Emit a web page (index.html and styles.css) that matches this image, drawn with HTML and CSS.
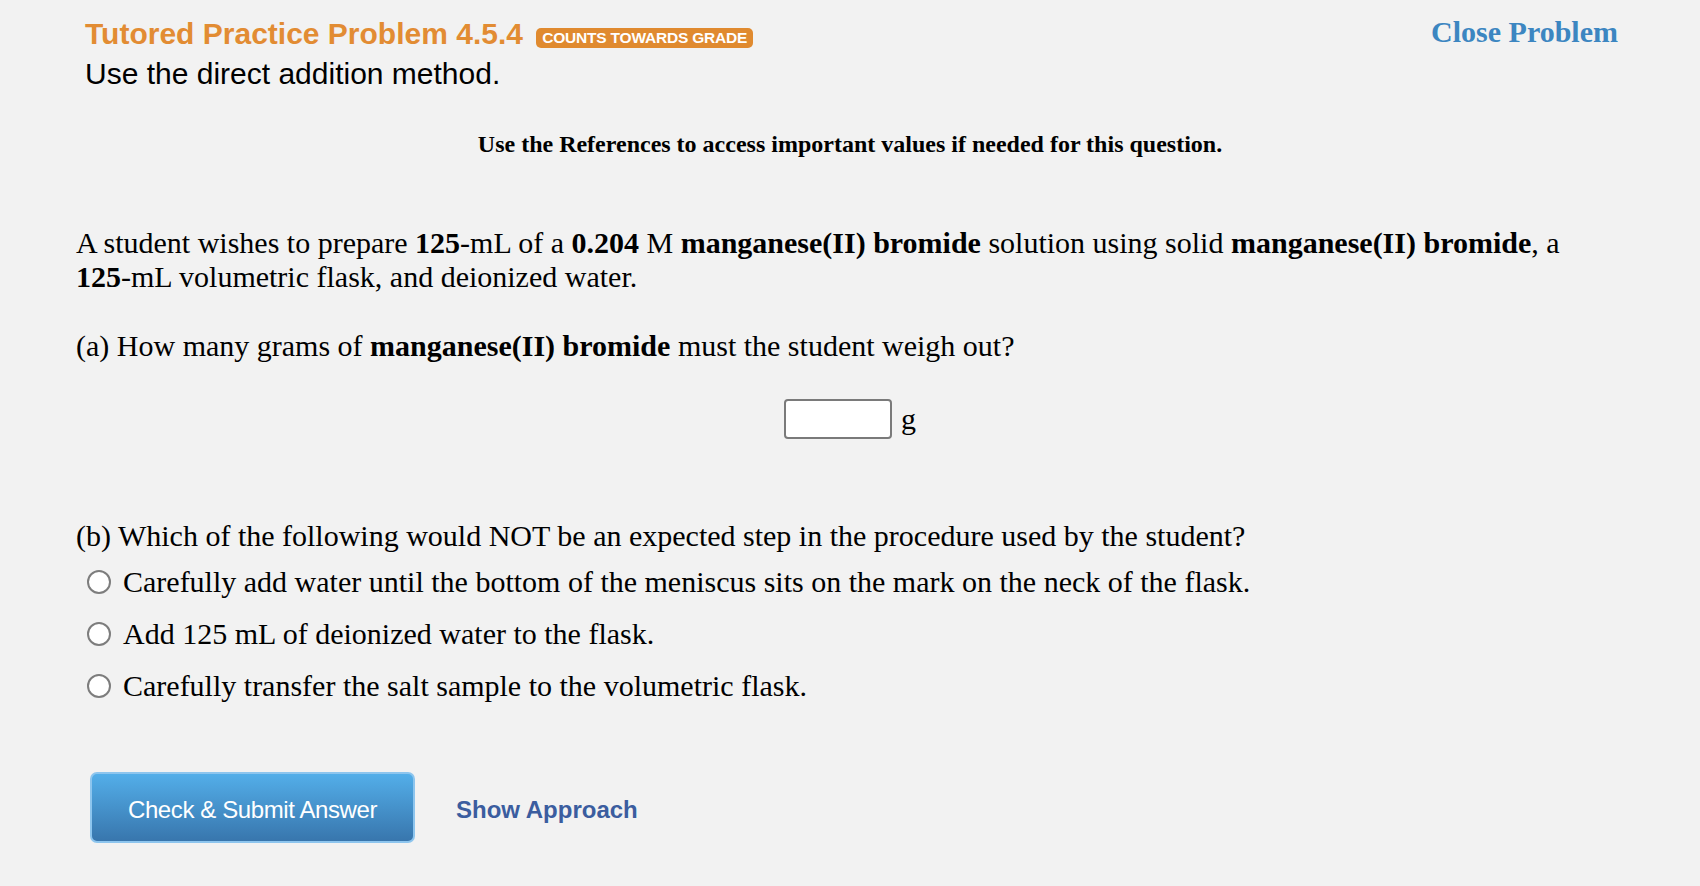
FILE: index.html
```html
<!DOCTYPE html>
<html lang="en">
  <head>
    <meta charset="UTF-8" />
    <meta name="viewport" content="width=device-width, initial-scale=1.0" />
    <title>Tutored Practice Problem 4.5.4</title>
    <link rel="stylesheet" href="styles.css">
  </head>
  <body>
    <div class="page">
      <header class="problem-header">
        <div class="heading">
          <h1 class="title">Tutored Practice Problem 4.5.4 <span class="badge">COUNTS TOWARDS GRADE</span></h1>
          <p class="subtitle">Use the direct addition method.</p>
        </div>
        <a class="close-link" href="#">Close Problem</a>
      </header>

      <p class="references">Use the References to access important values if needed for this question.</p>

      <div class="question">
        <p class="intro">
          A student wishes to prepare <b>125</b>-mL of a <b>0.204</b> M <b>manganese(II) bromide</b> solution using solid <b>manganese(II) bromide</b>, a <span class="nowrap"><b>125</b>-mL</span> volumetric flask, and deionized water.
        </p>

        <p class="part">(a) How many grams of <b>manganese(II) bromide</b> must the student weigh out?</p>

        <div class="answer-row">
          <input type="text" class="answer-input" />
          <span class="unit">g</span>
        </div>

        <p class="part part-b">(b) Which of the following would NOT be an expected step in the procedure used by the student?</p>

        <div class="options">
          <label class="option"><input type="radio" name="step" /> Carefully add water until the bottom of the meniscus sits on the mark on the neck of the flask.</label>
          <label class="option"><input type="radio" name="step" /> Add 125 mL of deionized water to the flask.</label>
          <label class="option"><input type="radio" name="step" /> Carefully transfer the salt sample to the volumetric flask.</label>
        </div>
      </div>

      <div class="actions">
        <button type="button" class="submit-btn">Check &amp; Submit Answer</button>
        <a class="approach-link" href="#">Show Approach</a>
      </div>
    </div>
  </body>
</html>
```

FILE: styles.css
```css
body {
  margin: 0;
  background: #f2f2f2;
  color: #000;
  font-family: 'Liberation Serif', 'Times New Roman', serif;
}
.page {
  min-height: 886px;
}
.problem-header {
  display: flex;
  justify-content: space-between;
  align-items: flex-start;
  padding: 16px 82px 0 85px;
}
.title {
  margin: 0;
  font: 700 30px/36px 'Liberation Sans', Arial, sans-serif;
  color: #e28c33;
}
.badge {
  display: inline-block;
  margin-left: 5px;
  padding: 0 6px;
  background: #e08a2f;
  color: white;
  border-radius: 5px;
  font-size: 15.5px;
  letter-spacing: -0.2px;
  line-height: 20px;
  vertical-align: 1px;
}
.subtitle {
  margin: 2px 0 0;
  font: 400 30px/40px 'Liberation Sans', Arial, sans-serif;
}
.close-link {
  font: 700 30px/32px 'Liberation Serif', serif;
  color: #3c86c1;
  text-decoration: none;
}
.references {
  margin: 35px 0 0;
  text-align: center;
  font-weight: bold;
  font-size: 24px;
  line-height: 30px;
}
.question {
  margin-top: 67px;
  padding: 0 76px;
  font-size: 30px;
  line-height: 34px;
}
.question p {
  margin: 0;
}
.nowrap {
  white-space: nowrap;
}
.question .part {
  margin-top: 35px;
}
.answer-row {
  display: flex;
  justify-content: center;
  align-items: center;
  margin-top: 36px;
}
.answer-input {
  width: 108px;
  height: 40px;
  box-sizing: border-box;
  border: 2px solid #7a7a7a;
  border-radius: 4px;
  background: white;
  margin: 0;
}
.unit {
  margin-left: 9px;
}
.question .part-b {
  margin-top: 80px;
}
.options {
  margin-top: 3px;
}
.option {
  display: flex;
  align-items: center;
  height: 52px;
}
.option input {
  appearance: none;
  width: 24px;
  height: 24px;
  margin: 0 12px 0 11px;
  box-sizing: border-box;
  border: 2px solid #7d7d7d;
  border-radius: 50%;
  background: white;
}
.actions {
  display: flex;
  align-items: center;
  gap: 41px;
  margin-top: 60px;
  padding-left: 90px;
}
.submit-btn {
  width: 325px;
  height: 71px;
  padding: 4px 0 0;
  border: 2px solid #8dc5ee;
  border-radius: 7px;
  background: linear-gradient(#53aee9, #3876ad);
  color: white;
  font: 400 24px 'Liberation Sans', Arial, sans-serif;
  letter-spacing: -0.4px;
  cursor: pointer;
}
.approach-link {
  padding-top: 4px;
  font: 700 24px 'Liberation Sans', Arial, sans-serif;
  color: #3b5d9f;
  text-decoration: none;
}
```
